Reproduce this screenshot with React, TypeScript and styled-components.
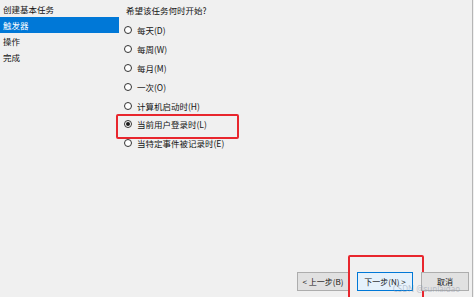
import React from "react";
import styled, { createGlobalStyle } from "styled-components";

const Global = createGlobalStyle`
  html, body { margin: 0; padding: 0; background: #f0f0f0; }
  body { font-family: "Noto Sans CJK SC", "Microsoft YaHei", "Noto Sans", sans-serif; }
  * { box-sizing: border-box; }
`;

const Window = styled.div`
  position: relative;
  width: 474px;
  height: 297px;
  display: flex;
  background: #f0f0f0;
  padding-right: 1px;
  overflow: hidden;
  font-size: 8.5px;
  color: #141414;
`;

const Nav = styled.nav`
  width: 119px;
  padding-top: 1px;
  display: flex;
  flex-direction: column;
`;

const NavItem = styled.div<{ $active?: boolean }>`
  height: 16px;
  line-height: 16px;
  padding-left: 3px;
  background: ${(p) => (p.$active ? "#0078d7" : "transparent")};
  color: ${(p) => (p.$active ? "#ffffff" : "#141414")};
`;

const Main = styled.main`
  flex: 1;
  display: flex;
  flex-direction: column;
  padding: 3px 0 5px 7px;
  border-right: 1px solid #b5b5b5;
`;

const Title = styled.div`
  height: 14px;
  line-height: 14px;
  margin-bottom: 4px;
`;

const Options = styled.div`
  display: flex;
  flex-direction: column;
  margin-left: -2px;
`;

const Option = styled.label<{ $highlight?: boolean }>`
  position: relative;
  height: 18.8px;
  display: flex;
  align-items: center;
  gap: 5px;
  width: max-content;
  ${(p) =>
    p.$highlight &&
    `
    &::after {
      content: "";
      position: absolute;
      left: -8px;
      top: -1px;
      width: 119px;
      height: 21px;
      border: 2px solid #e8262d;
      border-radius: 2px;
      pointer-events: none;
    }
  `}
`;

const Radio = styled.span<{ $checked?: boolean }>`
  width: 8px;
  height: 8px;
  border-radius: 50%;
  border: 1px solid #333333;
  background: #ffffff;
  display: flex;
  align-items: center;
  justify-content: center;
  &::before {
    content: "";
    width: 4px;
    height: 4px;
    border-radius: 50%;
    background: ${(p) => (p.$checked ? "#1a1a1a" : "transparent")};
  }
`;

const Footer = styled.div`
  margin-top: auto;
  display: flex;
  justify-content: flex-end;
  align-items: center;
  gap: 8px;
  padding-right: 3px;
  margin-bottom: 1px;
`;

const Button = styled.div<{ $primary?: boolean; $w: number }>`
  position: relative;
  width: ${(p) => p.$w}px;
  height: 19px;
  display: flex;
  align-items: center;
  justify-content: center;
  background: ${(p) => (p.$primary ? "#e5f1fb" : "#e1e1e1")};
  border: ${(p) => (p.$primary ? "1.5px solid #0078d7" : "1px solid #adadad")};
  color: #141414;
  font-size: 8px;
`;

const CallOut = styled.div`
  position: relative;
  &::after {
    content: "";
    position: absolute;
    left: -9px;
    right: -11px;
    top: -17px;
    bottom: -12px;
    border: 2px solid #e8262d;
    border-radius: 2px;
    pointer-events: none;
  }
`;

const Watermark = styled.div`
  position: absolute;
  right: 14px;
  bottom: 3px;
  font-size: 8px;
  color: rgba(140, 150, 170, 0.5);
  font-family: "Noto Sans", sans-serif;
  pointer-events: none;
`;

const options = [
  "每天(D)",
  "每周(W)",
  "每月(M)",
  "一次(O)",
  "计算机启动时(H)",
  "当前用户登录时(L)",
  "当特定事件被记录时(E)",
];

export default function App() {
  return (
    <>
      <Global />
      <Window>
        <Nav>
          <NavItem>创建基本任务</NavItem>
          <NavItem $active>触发器</NavItem>
          <NavItem>操作</NavItem>
          <NavItem>完成</NavItem>
        </Nav>
        <Main>
          <Title>希望该任务何时开始?</Title>
          <Options>
            {options.map((o, i) => (
              <Option key={o} $highlight={i === 5}>
                <Radio $checked={i === 5} />
                <span>{o}</span>
              </Option>
            ))}
          </Options>
          <Footer>
            <Button $w={52}>&lt; 上一步(B)</Button>
            <CallOut>
              <Button $primary $w={56}>下一步(N) &gt;</Button>
            </CallOut>
            <Button $w={48}>取消</Button>
          </Footer>
        </Main>
        <Watermark>CSDN @sunlaidao</Watermark>
      </Window>
    </>
  );
}
